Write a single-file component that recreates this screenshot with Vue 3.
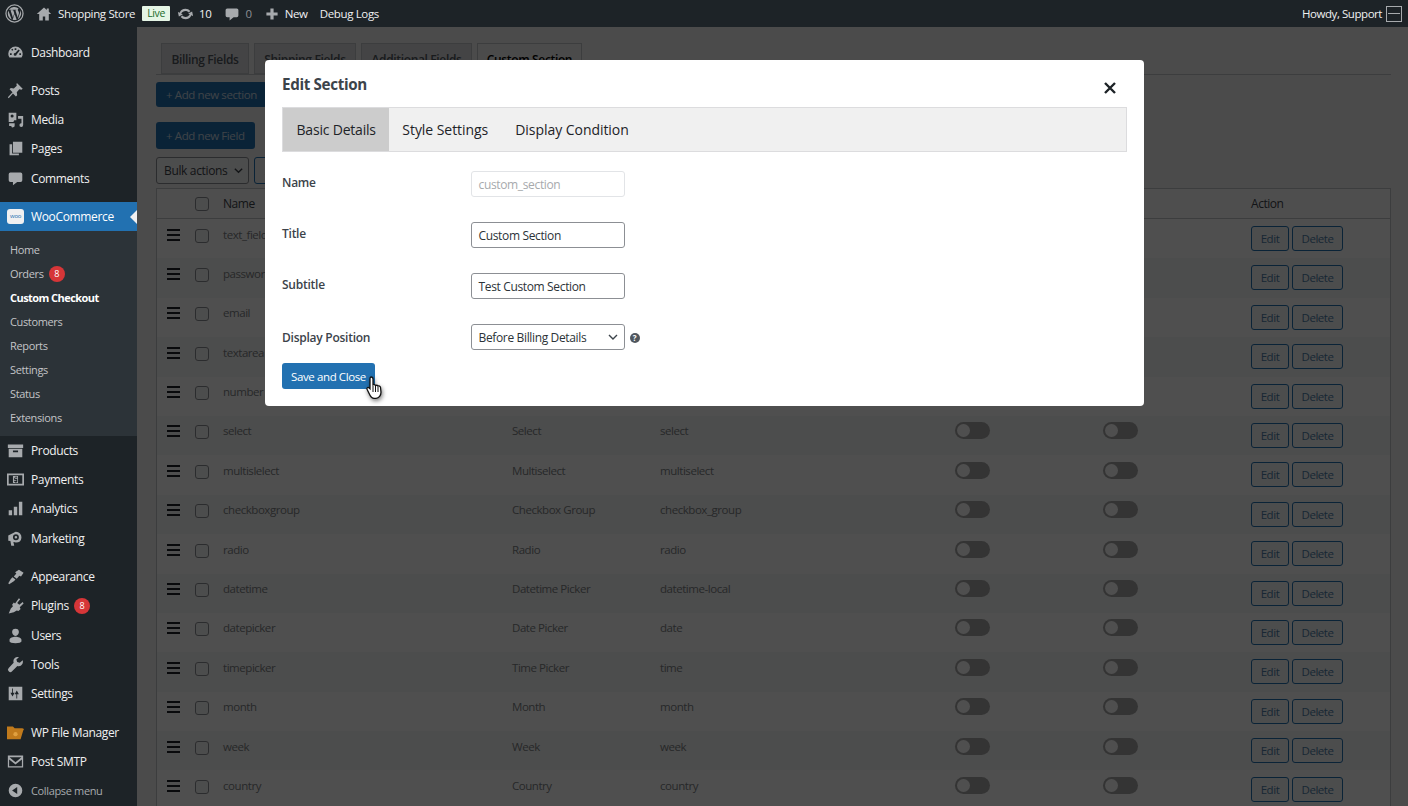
<script setup>
const sideTop = [
  { name: 'Dashboard', icon: 'dash', gap: true },
  { name: 'Posts', icon: 'pin' },
  { name: 'Media', icon: 'media' },
  { name: 'Pages', icon: 'pages' },
  { name: 'Comments', icon: 'comment', gap: true },
]
const subItems = [
  { name: 'Home' },
  { name: 'Orders', badge: 8 },
  { name: 'Custom Checkout', current: true },
  { name: 'Customers' },
  { name: 'Reports' },
  { name: 'Settings' },
  { name: 'Status' },
  { name: 'Extensions' },
]
const sideMiddle = [
  { name: 'Products', icon: 'box' },
  { name: 'Payments', icon: 'money' },
  { name: 'Analytics', icon: 'bars' },
  { name: 'Marketing', icon: 'mega', gap: true },
  { name: 'Appearance', icon: 'brush' },
  { name: 'Plugins', icon: 'plug', badge: 8 },
  { name: 'Users', icon: 'user' },
  { name: 'Tools', icon: 'wrench' },
  { name: 'Settings', icon: 'sliders', gap: true },
  { name: 'WP File Manager', icon: 'folder' },
  { name: 'Post SMTP', icon: 'mail' },
]
const icons = {
  dash: 'M10 3a8.500 8.500 0 0 0-8.500 8.500c0 1.700.5 3.200 1.400 4.500h14.200c.9-1.300 1.400-2.800 1.400-4.500A8.500 8.500 0 0 0 10 3zM9 5h2v2H9zM5 6.500 6.500 5.500l1 1.500-1.500 1zM3.500 11h2v2h-2zm11 0h2v2h-2zM13.500 6.500 15 7.500 11.300 12.300a1.700 1.700 0 1 1-1.500-1.800z',
  pin: 'M12 1.500l6.500 6.500-1.500 1-2.500-.5-3 3.500.5 3.500-1.500 1.500-3.500-3.500L2 19l-1-1 5.500-6L3 8.500 4.500 7l3.500.5 3.500-3-.5-2.500z',
  media: 'M2 2h9v9H8.500L7.500 13H2zm4 2a1.800 1.800 0 1 0 0 3.600A1.800 1.800 0 0 0 6 4zm7 2h6v10.500a2.200 2.200 0 1 1-2-2.200V9h-4zM2.500 14.500h6.500v2.500a2 2 0 0 1-4 .5H2.500z',
  pages: 'M7 2h11v13H7zM3 5h3v11h8v2H3z',
  comment: 'M4 3h12a2 2 0 0 1 2 2v7a2 2 0 0 1-2 2h-4l-5 4v-4H4a2 2 0 0 1-2-2V5a2 2 0 0 1 2-2z',
  box: 'M1 3h18v4H1zm1 5h16v10H2zm5 2v2h6v-2z',
  money: 'M0 3h20v14H0zm2 2v10h16V5zm5 1h6v8H7zm3 .800V8H8.500v2.500H11v1H8.500V13H10v1h1v-1h1v-3.500H9.500v-1H12V7.500h-1V6z',
  bars: 'M2 12h4v6H2zm6-4h4v10H8zm6-6h4v16h-4z',
  mega: 'M17 9a6.500 6.500 0 0 0-6.500-7 3 3 0 0 0-2 1L1.500 6.500v6L4 13l1 5.500h3.500L7.500 14l2 .5c.4.200.7.300 1 .300A6.500 6.500 0 0 0 17 9zm-6.500-4a3.500 3.500 0 1 1 0 7 3.500 3.500 0 0 1 0-7zm0 2a1.500 1.500 0 1 0 0 3 1.500 1.500 0 0 0 0-3z',
  brush: 'M14 2l5.500 3.500-3 4.500-2-1-3 3.500-3.500-2.500 3-3.500-1.500-1.500zM6.500 11l3.500 2.500-2 2-5.500 3.500-1-1 3-5z',
  plug: 'M14 1.500l1.500 1-3.500 4.500 2.500 2 4-3 1 1.500-4.500 4.500 1 2-2.500 2.500-2-.5L8 18l-6 1.500 2.500-6 2.500-2.500-1-2 2-2.500 1.500 1z',
  user: 'M10 2a4 4 0 0 1 4 4c0 2-1.500 4.500-4 4.500S6 8 6 6a4 4 0 0 1 4-4zM3 15c0-2 4-3.500 7-3.500s7 1.500 7 3.500v2c0 1-3 2-7 2s-7-1-7-2z',
  wrench: 'M18.500 5l-3.500 3-3-1-1-3 3-2.500c-3.500-1-6.500 1.500-6.500 4.500 0 .7.100 1.300.300 1.800L2 14a2.800 2.800 0 0 0 4 4l6.200-6.300c.5.200 1.100.3 1.800.3 3.200 0 5.500-3.500 4.500-7z',
  sliders: 'M2 2h16v16H2zm4 2v5H4l2.500 4.500L9 9H7V4zm6 12v-5h2l-2.500-4.500L9 11h2v5z',
  mail: 'M1 3h18v14H1zm2 2 7 6 7-6zm-.500 2.500v8h15v-8L10 13.500z',
}
const rows = [
  { name: 'text_field', label: 'Text', type: 'text' },
  { name: 'password', label: 'Password', type: 'password' },
  { name: 'email', label: 'Email', type: 'email' },
  { name: 'textarea', label: 'Textarea', type: 'textarea' },
  { name: 'number', label: 'Number', type: 'number' },
  { name: 'select', label: 'Select', type: 'select' },
  { name: 'multislelect', label: 'Multiselect', type: 'multiselect' },
  { name: 'checkboxgroup', label: 'Checkbox Group', type: 'checkbox_group' },
  { name: 'radio', label: 'Radio', type: 'radio' },
  { name: 'datetime', label: 'Datetime Picker', type: 'datetime-local' },
  { name: 'datepicker', label: 'Date Picker', type: 'date' },
  { name: 'timepicker', label: 'Time Picker', type: 'time' },
  { name: 'month', label: 'Month', type: 'month' },
  { name: 'week', label: 'Week', type: 'week' },
  { name: 'country', label: 'Country', type: 'country' },
]
</script>

<template>
  <div class="page">
    <header class="adminbar">
      <div class="bar-left">
        <svg class="wp-logo" viewBox="0 0 20 20"><circle cx="10" cy="10" r="9" fill="none" stroke="#a7aaad" stroke-width="1.300"/><path fill="#a7aaad" d="M3 10c0 2.800 1.600 5.200 4 6.300L3.600 7.100C3.200 8 3 9 3 10zm11.700-.4c0-.9-.3-1.500-.6-2-.3-.5-.7-1-.7-1.500 0-.6.5-1.200 1.100-1.200h.1A7 7 0 0 0 4.200 6.100h.5c.7 0 1.900-.1 1.900-.1.400 0 .4.600 0 .6 0 0-.4 0-.8.100l2.500 7.400L9.800 9.700 8.700 6.700c-.4 0-.7-.1-.7-.1-.4 0-.3-.6 0-.6 0 0 1.100.1 1.800.1s1.900-.1 1.900-.1c.4 0 .4.600 0 .6 0 0-.4 0-.8.100l2.500 7.400.7-2.300c.3-1 .6-1.600.6-2.200zm-4.600 1-2.100 6a7 7 0 0 0 4.300-.1zm6-3.900v.8c0 .7-.1 1.500-.5 2.500l-2.100 6.100a7 7 0 0 0 2.600-9.400z"/></svg>
        <span class="bar-item shop"><svg class="bar-icon" viewBox="0 0 20 20"><path d="M10 2 1 10h3v8h4.500v-5h3v5H16v-8h3l-3-2.700V3h-2.500v2z"/></svg>Shopping Store</span>
        <span class="live">Live</span>
        <span class="bar-item updates"><svg class="bar-icon refresh" viewBox="0 0 20 20"><path d="M10 3.500c-3.400 0-6.200 2-7.300 5L.5 7.500 1.700 13l5-2.400-2-1c.9-2 3-3.300 5.300-3.300 1.600 0 3.100.7 4.100 1.800l2-1.800A8.400 8.400 0 0 0 10 3.500zM18.300 7l-5 2.400 2 1c-.9 2-3 3.300-5.300 3.300-1.600 0-3.100-.7-4.100-1.800l-2 1.800a8.400 8.400 0 0 0 6.100 2.800c3.400 0 6.200-2 7.300-5l2.200 1z"/></svg>10</span>
        <span class="bar-item muted"><svg class="bar-icon" viewBox="0 0 20 20"><path d="M4 3h12a2 2 0 0 1 2 2v7a2 2 0 0 1-2 2h-4l-5 4v-4H4a2 2 0 0 1-2-2V5a2 2 0 0 1 2-2z"/></svg>0</span>
        <span class="bar-item"><svg class="bar-icon" viewBox="0 0 20 20"><path d="M8 3h4v5h5v4h-5v5H8v-5H3V8h5z"/></svg>New</span>
        <span class="bar-item">Debug Logs</span>
      </div>
      <div class="bar-right">
        <span>Howdy, Support</span>
        <span class="avatar"><i></i></span>
      </div>
    </header>

    <div class="body-wrap">
      <aside class="sidebar">
        <nav class="menu first">
          <div v-for="item in sideTop" :key="item.name" class="menu-item" :class="{ gap: item.gap }">
            <svg class="menu-icon" viewBox="0 0 20 20"><path fill-rule="evenodd" :d="icons[item.icon]"/></svg>
            <span>{{ item.name }}</span>
          </div>
        </nav>
        <div class="menu-item active">
          <span class="woo-icon">woo</span>
          <span>WooCommerce</span>
          <i class="active-arrow"></i>
        </div>
        <div class="submenu">
          <div v-for="sub in subItems" :key="sub.name" class="sub-item" :class="{ current: sub.current }">
            {{ sub.name }}<span v-if="sub.badge" class="badge">{{ sub.badge }}</span>
          </div>
        </div>
        <nav class="menu">
          <div v-for="item in sideMiddle" :key="item.name" class="menu-item" :class="{ gap: item.gap }">
            <svg v-if="item.icon === 'folder'" class="menu-icon folder" viewBox="0 0 20 20"><path fill="#c07a1c" d="M0 3h7l2 2h9l2 1-1 2-3 10H0z"/><circle cx="10" cy="12" r="2.500" fill="#e0a040"/></svg>
            <svg v-else class="menu-icon" viewBox="0 0 20 20"><path fill-rule="evenodd" :d="icons[item.icon]"/></svg>
            <span>{{ item.name }}</span>
            <span v-if="item.badge" class="badge">{{ item.badge }}</span>
          </div>
          <div class="menu-item collapse">
            <svg class="menu-icon" viewBox="0 0 20 20"><path fill-rule="evenodd" d="M10 2a8 8 0 1 1 0 16 8 8 0 0 1 0-16zm2 4-6 4 6 4z"/></svg>
            <span>Collapse menu</span>
          </div>
        </nav>
      </aside>

      <main class="content">
        <div class="tabs">
          <span class="tab t1">Billing Fields</span>
          <span class="tab t2">Shipping Fields</span>
          <span class="tab t3">Additional Fields</span>
          <span class="tab t4 on">Custom Section</span>
        </div>
        <div class="btn-line first-btn"><button class="primary">+ Add new section</button></div>
        <div class="btn-line field-btn"><button class="primary">+ Add new Field</button></div>
        <div class="bulk-line">
          <span class="bulk">Bulk actions<svg viewBox="0 0 12 12"><path d="M2 4l4 4 4-4" fill="none" stroke="currentColor" stroke-width="1.500"/></svg></span>
          <span class="apply">Apply</span>
        </div>
        <div class="table">
          <div class="row head">
            <span class="c-drag"></span>
            <span class="c-check"><i class="check"></i></span>
            <span class="c-name">Name</span>
            <span class="c-label"></span>
            <span class="c-type"></span>
            <span class="c-tog"></span>
            <span class="c-tog"></span>
            <span class="c-act">Action</span>
          </div>
          <div v-for="r in rows" :key="r.name" class="row">
            <span class="c-drag"><i class="burger"></i></span>
            <span class="c-check"><i class="check"></i></span>
            <span class="c-name">{{ r.name }}</span>
            <span class="c-label">{{ r.label }}</span>
            <span class="c-type">{{ r.type }}</span>
            <span class="c-tog"><i class="toggle"></i></span>
            <span class="c-tog"><i class="toggle"></i></span>
            <span class="c-act"><span class="mini edit">Edit</span><span class="mini del">Delete</span></span>
          </div>
        </div>
      </main>
    </div>

    <div class="overlay"></div>

    <section class="modal">
      <div class="modal-head">
        <h2>Edit Section</h2>
        <svg class="close" viewBox="0 0 14 14"><path d="M2 2l10 10M12 2 2 12" fill="none" stroke="#1d2327" stroke-width="2.400"/></svg>
      </div>
      <div class="modal-tabs">
        <span class="m-tab on">Basic Details</span>
        <span class="m-tab">Style Settings</span>
        <span class="m-tab">Display Condition</span>
      </div>
      <div class="form">
        <div class="f-row">
          <label>Name</label>
          <span class="input disabled">custom_section</span>
        </div>
        <div class="f-row">
          <label>Title</label>
          <span class="input">Custom Section</span>
        </div>
        <div class="f-row">
          <label>Subtitle</label>
          <span class="input">Test Custom Section</span>
        </div>
        <div class="f-row last">
          <label>Display Position</label>
          <span class="input select">Before Billing Details<svg viewBox="0 0 12 12"><path d="M2 4l4 4 4-4" fill="none" stroke="#3c434a" stroke-width="1.400"/></svg></span>
          <span class="help">?</span>
        </div>
      </div>
      <button class="save">Save and Close</button>
      <svg class="cursor" viewBox="0 0 20 26"><path d="M6 2c1 0 2 .8 2 2v6c1-.5 2-.3 2.500.5 1-.5 2-.2 2.500.6 1-.4 2.200 0 2.500 1.200l.5 5c0 3-2 6-5 6H9c-2 0-3-1-4-3l-3-6c-.5-1 .5-2.300 2-1.500l1 1V4c0-1.200 0-2 1-2z" fill="#fff" stroke="#111" stroke-width="1.300"/><path d="M8 11v6M10.500 11v6M13 12v5" stroke="#111" stroke-width="1"/></svg>
    </section>
  </div>
</template>

<style>
html, body { margin: 0; background: #4b4b4b; }
</style>

<style scoped>
.page {
  position: relative;
  width: 1408px;
  height: 806px;
  overflow: hidden;
  font-family: "Open Sans", "Noto Sans", sans-serif;
  font-size: 12px;
  letter-spacing: -0.35px;
  background: #f0f0f1;
}
.adminbar {
  position: relative;
  z-index: 3;
  height: 27px;
  background: #1d2327;
  color: #f0f0f1;
  display: flex;
  justify-content: space-between;
  align-items: center;
  font-size: 11.5px;
}
.bar-left { display: flex; align-items: center; }
.wp-logo { width: 19px; height: 19px; margin: 0 12px 0 5px; }
.bar-item { display: flex; align-items: center; gap: 5px; margin-right: 12px; }
.shop { margin-right: 7px; }
.shop .bar-icon { margin-right: 1px; }
.bar-icon { width: 16px; height: 16px; fill: #a7aaad; }
.refresh { width: 17px; }
.updates { margin-right: 13px; }
.live {
  background: #e5f5e5;
  color: #1a6b2a;
  font-size: 10.5px;
  padding: 0 5px;
  height: 15px;
  line-height: 15px;
  border-radius: 1px;
  margin-right: 7px;
}
.muted { color: #8c8f94; }
.bar-right { display: flex; align-items: center; gap: 4px; margin-right: 6px; letter-spacing: -0.45px; }
.avatar {
  width: 14px;
  height: 14px;
  border: 1px solid #a7aaad;
  display: flex;
  align-items: center;
}
.avatar i { display: block; width: 12px; height: 1px; margin-left: 1px; background: #a7aaad; }

.body-wrap { display: flex; height: 779px; }
.sidebar {
  position: relative;
  z-index: 3;
  width: 137px;
  flex: none;
  background: #1d2327;
  color: #f0f0f1;
  padding-top: 11px;
  box-sizing: border-box;
}
.menu-item {
  display: flex;
  align-items: center;
  height: 29.200px;
  padding-left: 7px;
  position: relative;
}
.menu-item.gap { margin-bottom: 9.500px; }
.first .menu-item { height: 29.400px; }
.first .menu-item.gap { margin-bottom: 8px; }
.first .menu-item.gap:last-child { margin-bottom: 9px; }
.menu-icon { width: 17px; height: 17px; fill: #a7aaad; margin-right: 7px; flex: none; }
.menu .badge { margin-left: 5px; }
.active {
  background: #2271b1;
  color: #fff;
  height: 29px;
}
.woo-icon {
  width: 17px;
  height: 15px;
  background: #f0f0f1;
  color: #2271b1;
  font-size: 6px;
  line-height: 15px;
  text-align: center;
  border-radius: 3px;
  margin-right: 7px;
}
.active-arrow {
  position: absolute;
  right: 0;
  top: 8px;
  border: 7px solid transparent;
  border-left: 0;
  border-right-color: #f0f0f1;
}
.submenu {
  background: #2c3338;
  padding: 7px 0 6px;
  font-size: 11px;
  color: #c3c4c7;
}
.sub-item {
  height: 24px;
  line-height: 24px;
  padding-left: 10px;
  display: flex;
  align-items: center;
}
.sub-item.current { color: #fff; font-weight: 700; letter-spacing: -0.55px; }
.badge {
  background: #d63638;
  color: #fff;
  width: 16px;
  height: 16px;
  border-radius: 50%;
  font-size: 9px;
  line-height: 16px;
  text-align: center;
  margin-left: 5px;
}
.collapse { color: #a7aaad; font-size: 11px; }

.content { flex: 1; padding: 16px 17px 0 19px; min-width: 0; color: #3c434a; }
.tabs {
  display: flex;
  gap: 5px;
  padding-left: 5px;
  height: 31px;
  border-bottom: 1px solid #c3c4c7;
}
.tab {
  box-sizing: border-box;
  text-align: center;
  white-space: nowrap;
  line-height: 31px;
  background: #dcdcde;
  border: 1px solid #c3c4c7;
  font-weight: 600;
  color: #50575e;
}
.t1 { width: 88px; }
.t2 { width: 102px; }
.t3 { width: 111px; }
.t4 { width: 105px; }
.tab.on { background: #f0f0f1; color: #000; }
.btn-line { height: 25px; }
.first-btn { margin-top: 7px; margin-bottom: 15px; }
.field-btn { height: 27px; }
.primary {
  height: 100%;
  padding: 0 10px;
  border: 0;
  border-radius: 3px;
  background: #2271b1;
  color: #c9d7e6;
  font: inherit;
  font-size: 11.500px;
  letter-spacing: -0.4px;
}
.bulk-line { display: flex; gap: 5px; margin-top: 8px; height: 27px; }
.bulk {
  display: flex;
  align-items: center;
  justify-content: space-between;
  padding: 0 4px 0 7px;
  width: 93px;
  box-sizing: border-box;
  border: 1px solid #8c8f94;
  border-radius: 3px;
  background: #f6f7f7;
  white-space: nowrap;
}
.bulk svg { width: 11px; height: 11px; }
.apply {
  border: 1px solid #2271b1;
  border-radius: 3px;
  color: #2271b1;
  padding: 0 10px;
  line-height: 25px;
}
.table {
  margin-top: 4px;
  border: 1px solid #c3c4c7;
  background: #f6f7f7;
  width: 1235px;
  box-sizing: border-box;
}
.row {
  display: flex;
  align-items: flex-start;
  height: 39.400px;
  font-size: 11.500px;
  letter-spacing: -0.45px;
  color: #7d8285;
}
.row:nth-child(even) { background: #fff; }
.row.head {
  height: 30px;
  box-sizing: border-box;
  border-bottom: 1px solid #c3c4c7;
  background: #fbfbfb;
  font-size: 12px;
  color: #3c434a;
  padding-top: 1px;
}
.row > span { padding-top: 6.500px; line-height: 18px; }
.row.head > span { padding-top: 5px; }
.c-drag { width: 38px; padding-left: 10px; box-sizing: border-box; flex: none; }
.c-check { width: 28px; flex: none; }
.c-name { width: 289px; flex: none; }
.c-label { width: 148px; flex: none; }
.c-type { width: 295px; flex: none; }
.c-tog { width: 148px; flex: none; display: flex; }
.row > .c-act { display: flex; gap: 3px; padding-top: 0; }
.row:not(.head) > .c-act { padding-top: 7px; }
.burger {
  display: block;
  width: 13px;
  height: 8px;
  margin-top: 3px;
  border-top: 2px solid #1d2327;
  border-bottom: 2px solid #1d2327;
  position: relative;
}
.burger::after {
  content: "";
  position: absolute;
  left: 0;
  right: 0;
  top: 3px;
  height: 2px;
  background: #1d2327;
}
.check {
  display: block;
  width: 12px;
  height: 12px;
  margin-top: 3px;
  border: 1px solid #8c8f94;
  border-radius: 3px;
  background: #f6f7f7;
}
.head .check { margin-top: 2px; }
.toggle {
  display: block;
  width: 35px;
  height: 17px;
  border-radius: 9px;
  background: #a8a8a8;
  position: relative;
}
.toggle::before {
  content: "";
  position: absolute;
  left: 2px;
  top: 2px;
  width: 13px;
  height: 13px;
  border-radius: 50%;
  background: #fff;
}
.mini {
  box-sizing: border-box;
  height: 25px;
  line-height: 23px;
  text-align: center;
  border: 1px solid #2271b1;
  border-radius: 3px;
  color: #4f7fa8;
  background: #f6f7f7;
  font-size: 11.500px;
}
.edit { width: 38px; }
.del { width: 51px; }

.overlay {
  position: absolute;
  left: 137px;
  top: 27px;
  right: 0;
  bottom: 0;
  background: rgba(0, 0, 0, 0.69);
  z-index: 4;
}
.modal {
  position: absolute;
  z-index: 5;
  left: 265px;
  top: 60px;
  width: 879px;
  height: 346px;
  background: #fff;
  border-radius: 4px;
  box-sizing: border-box;
  padding: 0 17px;
  color: #2c3338;
}
.modal-head {
  height: 47px;
  display: flex;
  justify-content: space-between;
  align-items: center;
}
.modal-head h2 {
  margin: 0;
  font-size: 15.200px;
  font-weight: 700;
  color: #3c434a;
}
.close { width: 14px; height: 14px; margin-right: 10px; position: relative; top: 4px; }
.modal-tabs {
  display: flex;
  height: 43px;
  border: 1px solid #dcdcde;
  background: #f0f0f0;
}
.m-tab {
  padding: 0 13.500px;
  line-height: 43px;
  font-size: 14px;
  letter-spacing: -0.05px;
  color: #1d2327;
}
.m-tab.on {
  background: #cccccc;
  padding: 0 13px 0 13.500px;
  letter-spacing: -0.2px;
}
.form { padding-top: 18.500px; }
.f-row {
  display: flex;
  align-items: center;
  height: 26px;
  margin-bottom: 25.200px;
  position: relative;
}
.f-row.last { margin-bottom: 0; }
.f-row label {
  width: 188.500px;
  font-size: 12px;
  font-weight: 600;
  letter-spacing: -0.25px;
  color: #3c434a;
  position: relative;
  top: -1px;
}
.f-row.last label { top: 0; }
.input {
  width: 154px;
  height: 26px;
  box-sizing: border-box;
  border: 1px solid #8c8f94;
  border-radius: 3px;
  padding: 0 7px;
  line-height: 25px;
  font-size: 12px;
  color: #2c3338;
  background: #fff;
  position: relative;
}
.input.select { line-height: 26px; }
.input.disabled { color: #a7aaad; border-color: #e2e4e7; }
.select svg {
  position: absolute;
  right: 5px;
  top: 6px;
  width: 12px;
  height: 12px;
}
.help {
  width: 10px;
  height: 10px;
  line-height: 10px;
  border-radius: 50%;
  background: #50575e;
  color: #fff;
  font-size: 8px;
  font-weight: 700;
  text-align: center;
  margin-left: 5px;
  position: relative;
  top: 1px;
}
.save {
  display: block;
  margin-top: 13px;
  height: 26px;
  width: 93px;
  padding: 0;
  border: 0;
  border-radius: 3px;
  background: #2271b1;
  color: #fff;
  font: inherit;
  font-size: 11.500px;
  letter-spacing: -0.4px;
}
.cursor {
  position: absolute;
  left: 100px;
  top: 315px;
  width: 20px;
  height: 26px;
  filter: drop-shadow(1px 2px 2px rgba(0, 0, 0, 0.5));
}
</style>
